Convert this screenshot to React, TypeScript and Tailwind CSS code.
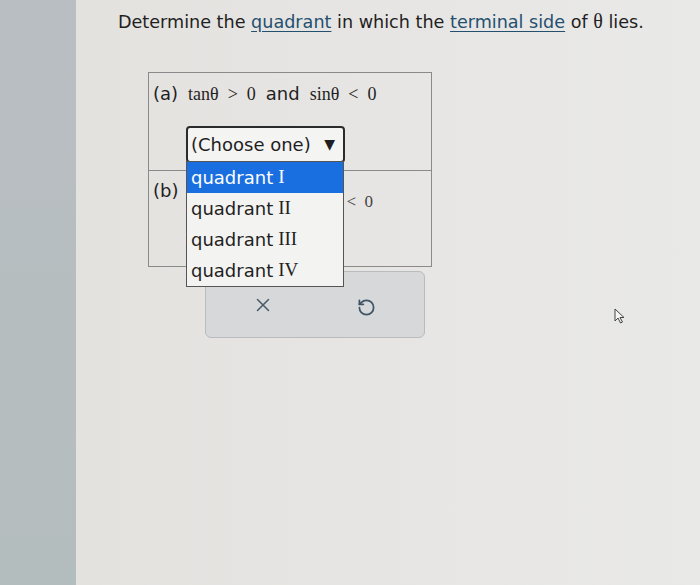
import { X, RotateCcw } from 'lucide-react';

const sans = { fontFamily: '"DejaVu Sans", Verdana, sans-serif' };
const serif = { fontFamily: '"Liberation Serif", "DejaVu Serif", serif' };

export default function App() {
  const options = ['quadrant I', 'quadrant II', 'quadrant III', 'quadrant IV'];

  return (
    <div className="flex h-[585px] w-[700px] overflow-hidden bg-[#e2e1de] text-[#1f1f1f]" style={sans}>
      <div className="w-[76px] shrink-0 bg-gradient-to-b from-[#b9bec2] to-[#b4bdbd]" />

      <div className="flex-1 bg-gradient-to-r from-[#e4e2df] to-[#e9e9e8] pl-[42px] pt-[6px]">
        <p className="text-[17.6px]">
          Determine the{' '}
          <span className="text-[#24506f] underline decoration-[#24506f] underline-offset-[3px]">quadrant</span> in which the{' '}
          <span className="text-[#24506f] underline decoration-[#24506f] underline-offset-[3px]">terminal side</span> of{' '}
          <span style={serif} className="text-[20px]">θ</span> lies.
        </p>

        <div className="relative ml-[30px] mt-[36px] w-[284px] border border-[#8a8a8a]">
          {/* part (a) */}
          <div className="h-[98px] border-b border-[#8a8a8a] px-[4px] pt-[7px]">
            <div className="flex items-baseline gap-[10px] text-[18px]">
              <span>(a)</span>
              <span style={serif} className="text-[18px]">
                tanθ&nbsp;&nbsp;&gt;&nbsp;&nbsp;0
              </span>
              <span>and</span>
              <span style={serif} className="text-[18px]">
                sinθ&nbsp;&nbsp;&lt;&nbsp;&nbsp;0
              </span>
            </div>
            <div className="ml-[33px] mt-[18px] flex h-[37px] w-[159px] items-center justify-between rounded-[4px] border-2 border-[#2b2b2b] bg-[#f4f4f3] pl-[3px] pr-[8px] text-[18px]">
              <span>(Choose one)</span>
              <span className="text-[14px]">▼</span>
            </div>
          </div>

          {/* part (b) */}
          <div className="flex h-[95px] px-[4px] pt-[6px] text-[18px]">
            <span>(b)</span>
            <span style={serif} className="ml-[168px] mt-[12px] text-[17px] text-[#444]">
              &lt;&nbsp;&nbsp;0
            </span>
          </div>

          {/* open dropdown */}
          <div className="absolute left-[37px] top-[88px] w-[158px] border border-[#555] bg-[#f3f3f2] text-[18px]" style={serif}>
            {options.map((o, i) => (
              <div
                key={o}
                className={`flex h-[31px] items-center pl-[4px] ${i === 0 ? 'bg-[#1a6fe0] text-white' : 'text-[#1f1f1f]'}`}
              >
                <span style={sans}>quadrant</span>
                <span className="ml-[5px] text-[19px]">{o.split(' ')[1]}</span>
              </div>
            ))}
          </div>
        </div>

        <div className="ml-[87px] mt-[4px] flex h-[67px] w-[220px] items-center justify-between rounded-[6px] border border-[#b8bcbf] bg-[#d6d8da] pl-[46px] pr-[48px]">
          <X size={22} strokeWidth={1.7} className="text-[#4b5d6b]" />
          <RotateCcw size={19} strokeWidth={2.2} className="mt-[5px] text-[#3f5566]" />
        </div>

        <div className="ml-[496px] -mt-[30px] text-[#555]">
          <svg width="14" height="18" viewBox="0 0 14 18">
            <path d="M1 1 L1 13 L4 10 L6.5 15 L8.5 14 L6 9.5 L10 9.5 Z" fill="#f5f5f5" stroke="#444" strokeWidth="1" />
          </svg>
        </div>
      </div>
    </div>
  );
}
